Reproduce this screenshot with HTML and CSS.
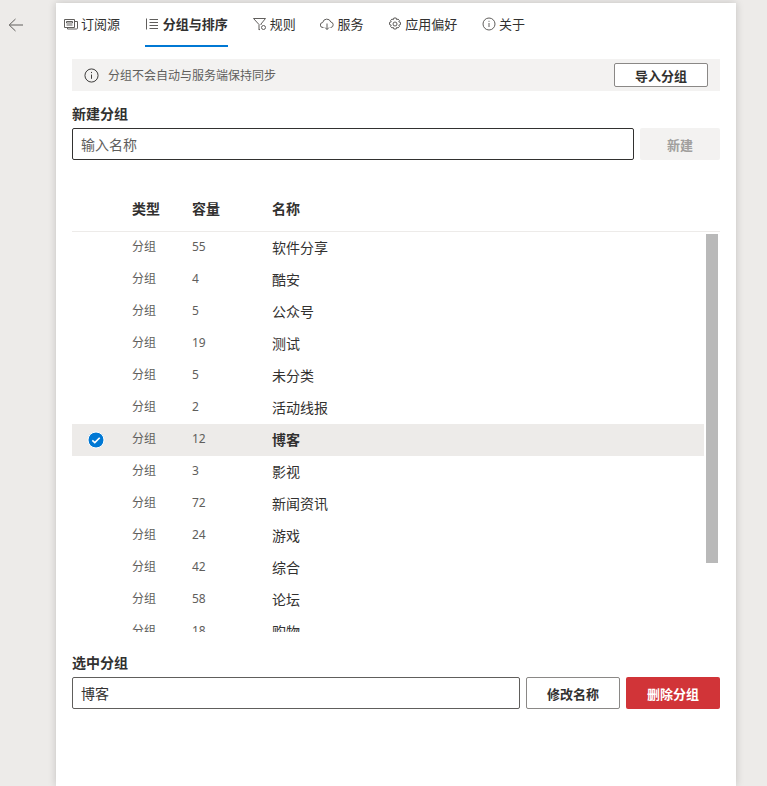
FILE: index.html
```html
<!DOCTYPE html>
<html lang="zh-CN">
<head>
    <meta charset="UTF-8">
    <meta name="viewport" content="width=device-width, initial-scale=1.0">
    <title>分组与排序</title>
    <link rel="stylesheet" href="styles.css">
</head>
<body>
    <div class="back-col">
        <svg class="back-icon" viewBox="0 0 16 14" fill="none" stroke="currentColor" stroke-width="1">
            <path d="M15 7H1.5M7.5 1L1.2 7l6.3 6"></path>
        </svg>
    </div>

    <div class="card">
        <nav class="tabs">
            <div class="tab">
                <svg class="tab-icon" viewBox="0 0 14 14" fill="none" stroke="currentColor" stroke-width="1">
                    <path d="M.5 2.500h10v8H.5zM2.500 4.500h6v1.500h-6zM2.500 8h6M10.500 4.500h3v6.500a1 1 0 0 1-1 1h-9v-1.500"></path>
                </svg>
                <span>订阅源</span>
            </div>
            <div class="tab active">
                <svg class="tab-icon small" viewBox="0 0 12 14" fill="none" stroke="currentColor" stroke-width="1">
                    <path d="M3.500 2.500H12M3.500 5.500H12M3.500 8.500H12M3.500 11.500H12M.5 1.500v11"></path>
                </svg>
                <span>分组与排序</span>
            </div>
            <div class="tab">
                <svg class="tab-icon" viewBox="0 0 14 14" fill="none" stroke="currentColor" stroke-width="1">
                    <path d="M.5 1.500h12L8 7v1M.5 1.500 6 7.500v5.500l1-.8"></path>
                    <circle cx="10.500" cy="10.500" r="2"></circle>
                </svg>
                <span>规则</span>
            </div>
            <div class="tab">
                <svg class="tab-icon" viewBox="0 0 14 14" fill="none" stroke="currentColor" stroke-width="1">
                    <path d="M3.500 10.500H3a2.500 2.500 0 0 1-.3-5A4.200 4.200 0 0 1 10.800 5 2.800 2.800 0 0 1 11 10.500h-.5M7 6.500v6M5 10.500l2 2 2-2"></path>
                </svg>
                <span>服务</span>
            </div>
            <div class="tab">
                <svg class="tab-icon" viewBox="0 0 14 14" fill="none" stroke="currentColor" stroke-width="1">
                    <circle cx="7" cy="7" r="2"></circle>
                    <path d="M5.800 1h2.400l.4 1.600 1.500-.5 1.300 1.300-.6 1.500 1.700.5v2.200l-1.700.5.600 1.500-1.300 1.300-1.500-.5-.4 1.600H5.800l-.4-1.600-1.500.5-1.300-1.300.6-1.500-1.700-.5V5.400l1.700-.5-.6-1.500 1.300-1.300 1.500.5z"></path>
                </svg>
                <span>应用偏好</span>
            </div>
            <div class="tab">
                <svg class="tab-icon" viewBox="0 0 14 14" fill="none" stroke="currentColor" stroke-width="1">
                    <circle cx="7" cy="7" r="6"></circle>
                    <path d="M7 6v4M7 3.800v1"></path>
                </svg>
                <span>关于</span>
            </div>
        </nav>

        <div class="info-bar">
            <div class="info-msg">
                <svg class="info-icon" viewBox="0 0 16 16" fill="none" stroke="currentColor" stroke-width="1">
                    <circle cx="8" cy="8" r="7"></circle>
                    <path d="M8 7v4.500M8 4.200v1.200"></path>
                </svg>
                <span>分组不会自动与服务端保持同步</span>
            </div>
            <button class="btn btn-small">导入分组</button>
        </div>

        <label class="field-label new-label">新建分组</label>
        <div class="field-row">
            <input class="text-input dark" type="text" placeholder="输入名称">
            <button class="btn btn-disabled">新建</button>
        </div>

        <div class="table-head">
            <span></span>
            <span>类型</span>
            <span>容量</span>
            <span>名称</span>
        </div>

        <div class="table-body">
            <div class="row"><span></span><span>分组</span><span>55</span><span class="name">软件分享</span></div>
            <div class="row"><span></span><span>分组</span><span>4</span><span class="name">酷安</span></div>
            <div class="row"><span></span><span>分组</span><span>5</span><span class="name">公众号</span></div>
            <div class="row"><span></span><span>分组</span><span>19</span><span class="name">测试</span></div>
            <div class="row"><span></span><span>分组</span><span>5</span><span class="name">未分类</span></div>
            <div class="row"><span></span><span>分组</span><span>2</span><span class="name">活动线报</span></div>
            <div class="row selected">
                <span class="check-cell">
                    <svg class="check" viewBox="0 0 18 18">
                        <circle cx="9" cy="9" r="8" fill="#0078d4" stroke="#fff" stroke-width="1"></circle>
                        <path d="M5.300 9.300l2.500 2.300 4.900-4.900" fill="none" stroke="#fff" stroke-width="1.600"></path>
                    </svg>
                </span>
                <span>分组</span><span>12</span><span class="name">博客</span>
            </div>
            <div class="row"><span></span><span>分组</span><span>3</span><span class="name">影视</span></div>
            <div class="row"><span></span><span>分组</span><span>72</span><span class="name">新闻资讯</span></div>
            <div class="row"><span></span><span>分组</span><span>24</span><span class="name">游戏</span></div>
            <div class="row"><span></span><span>分组</span><span>42</span><span class="name">综合</span></div>
            <div class="row"><span></span><span>分组</span><span>58</span><span class="name">论坛</span></div>
            <div class="row"><span></span><span>分组</span><span>18</span><span class="name">购物</span></div>
            <div class="scroll-thumb"></div>
        </div>

        <label class="field-label selected-label">选中分组</label>
        <div class="field-row">
            <input class="text-input" type="text" value="博客">
            <button class="btn btn-outline">修改名称</button>
            <button class="btn btn-danger">删除分组</button>
        </div>
    </div>
</body>
</html>
```

FILE: styles.css
```css
* {
    margin: 0;
    padding: 0;
    box-sizing: border-box;
}

html,
body {
    height: 786px;
    overflow: hidden;
}

body {
    font-family: "Noto Sans", "Noto Sans CJK SC", sans-serif;
    background: #edebe9;
    color: #323130;
    display: flex;
}

.back-col {
    width: 56px;
    flex: none;
    padding: 18px 0 0 8px;
}

.back-icon {
    display: block;
    width: 16px;
    height: 14px;
    color: #605e5c;
}

.card {
    width: 680px;
    flex: none;
    margin-top: 3px;
    padding: 0 16px;
    background: #fff;
    box-shadow: 0 0 8px rgba(0, 0, 0, 0.18);
}

.tabs {
    display: flex;
    gap: 24.8px;
    height: 44px;
    margin-left: -8px;
}

.tab {
    display: flex;
    align-items: center;
    gap: 3px;
    height: 44px;
    padding-bottom: 3px;
    font-size: 13px;
    line-height: 18px;
}

.tab-icon {
    width: 14px;
    height: 14px;
    flex: none;
    color: #605e5c;
}

.tab-icon.small {
    width: 12px;
    margin-right: 2px;
}

.tab.active {
    font-weight: 700;
    border-bottom: 2px solid #0078d4;
    padding-bottom: 1px;
    margin-bottom: -2px;
    padding-left: 1px;
}

.info-bar {
    display: flex;
    align-items: center;
    justify-content: space-between;
    height: 32px;
    margin-top: 12px;
    padding: 0 12px;
    background: #f3f2f1;
}

.info-msg {
    display: flex;
    align-items: center;
    gap: 9px;
    font-size: 12px;
    color: #605e5c;
}

.info-icon {
    width: 15px;
    height: 15px;
    color: #323130;
}

.field-label {
    display: block;
    font-size: 14px;
    line-height: 18px;
    font-weight: 700;
}

.new-label {
    margin-top: 14px;
    margin-bottom: 5px;
}

.selected-label {
    margin-top: 22px;
    margin-bottom: 5px;
}

.field-row {
    display: flex;
    gap: 6px;
}

.text-input {
    flex: 1;
    min-width: 0;
    height: 32px;
    padding: 0 8px;
    border: 1px solid #605e5c;
    border-radius: 2px;
    font: inherit;
    font-size: 14px;
    color: #323130;
    outline: none;
}

.text-input.dark {
    border-color: #323130;
}

.text-input::placeholder {
    color: #605e5c;
}

.btn {
    height: 32px;
    border: 1px solid #8a8886;
    border-radius: 2px;
    background: #fff;
    color: #323130;
    font-family: inherit;
    font-size: 13px;
    font-weight: 700;
}

.btn-small {
    width: 94px;
    height: 24px;
}

.btn-disabled {
    width: 80px;
    border: none;
    background: #f3f2f1;
    color: #a19f9d;
}

.btn-outline {
    width: 94px;
}

.btn-danger {
    width: 94px;
    border: none;
    background: #d13438;
    color: #fff;
}

.table-head,
.row {
    display: grid;
    grid-template-columns: 60px 60px 80px 1fr;
    align-items: center;
}

.table-head {
    height: 42px;
    margin-top: 30px;
    padding-bottom: 6px;
    border-bottom: 1px solid #edebe9;
    font-size: 14px;
    font-weight: 700;
}

.table-body {
    position: relative;
    height: 400px;
    overflow: hidden;
}

.row {
    width: 632px;
    height: 32px;
    font-size: 12px;
    color: #605e5c;
}

.row span {
    padding-bottom: 4px;
}

.row .name {
    padding-bottom: 2px;
    font-size: 14px;
    color: #323130;
}

.row.selected {
    background: #edebe9;
}

.row.selected .name {
    font-weight: 700;
}

.row .check-cell {
    display: flex;
    justify-content: center;
    padding: 0 13px 0 0;
}

.check {
    display: block;
    width: 18px;
    height: 18px;
}

.scroll-thumb {
    position: absolute;
    top: 2px;
    right: 2px;
    width: 12px;
    height: 329px;
    background: #b9b9b9;
}
```
